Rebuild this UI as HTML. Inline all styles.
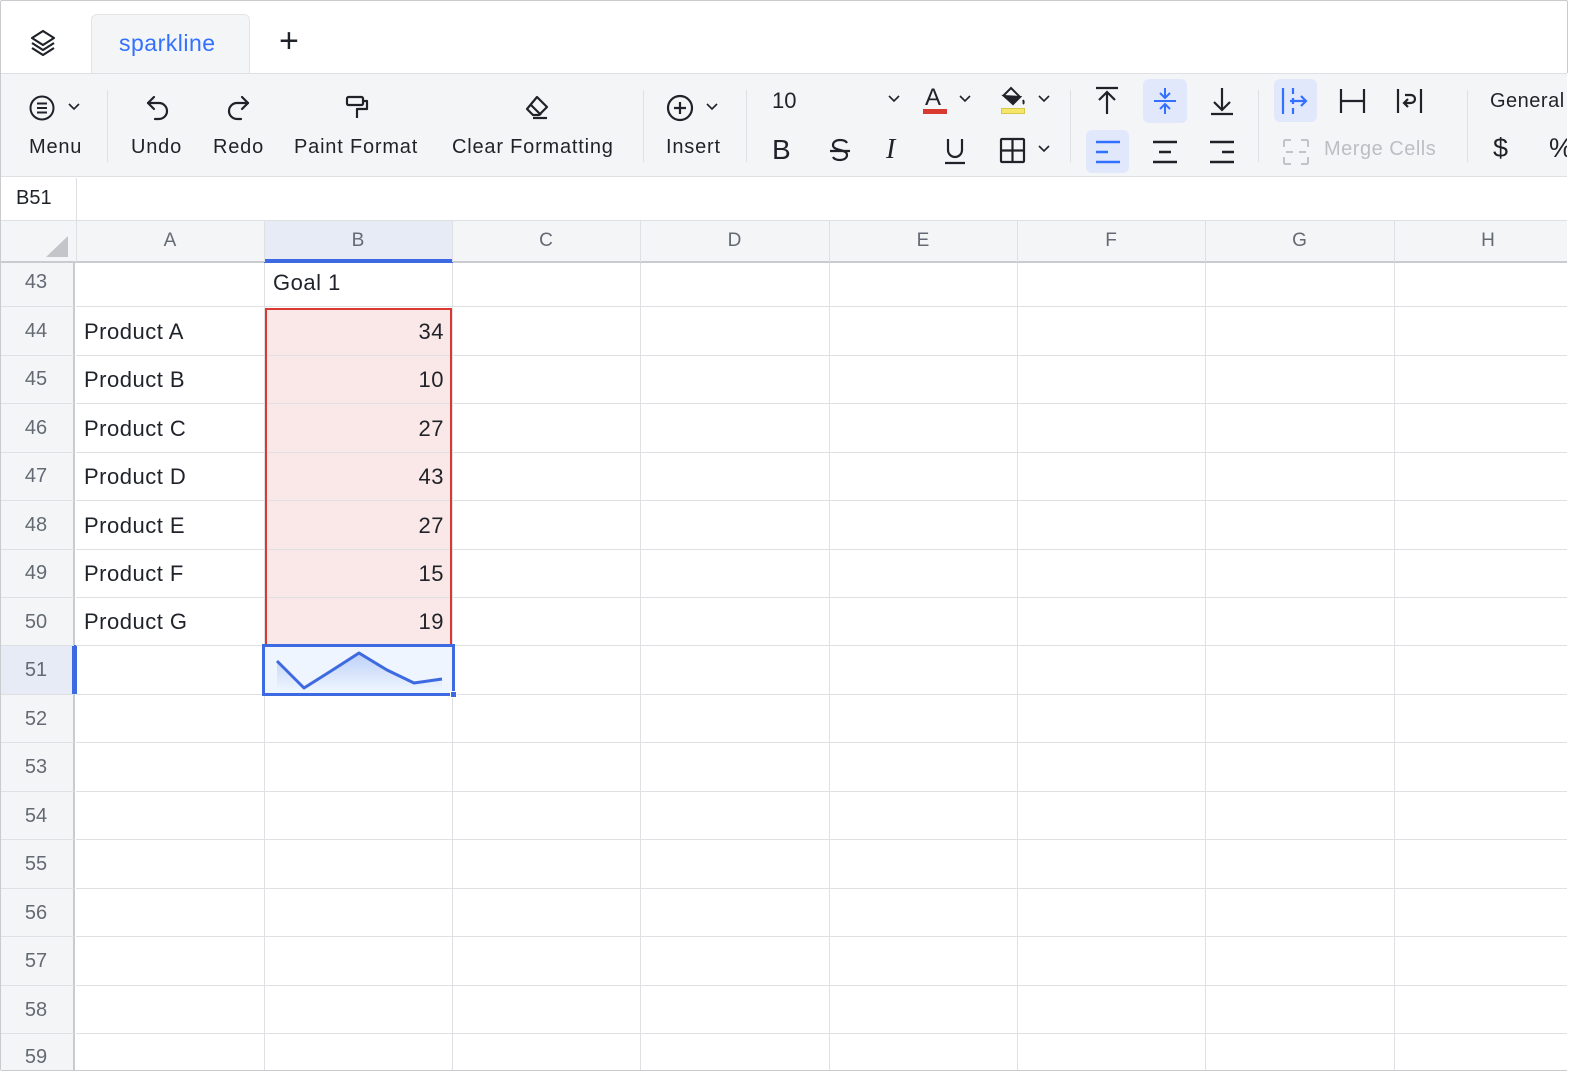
<!DOCTYPE html>
<html><head><meta charset="utf-8"><style>
*{box-sizing:border-box;margin:0;padding:0}
body{width:1574px;height:1076px;overflow:hidden;background:#fff;font-family:"Liberation Sans",sans-serif;color:#1f2329;position:relative}
.a{position:absolute}
.lbl{position:absolute;font-size:20px;color:#1f2329;top:136px;white-space:nowrap;letter-spacing:0.8px}
.hl{position:absolute;height:1px;left:76px;right:7px;background:#dee0e3}
.vl{position:absolute;width:1px;top:263px;bottom:6px;background:#dee0e3}
.rn{position:absolute;left:0;width:72px;text-align:center;font-size:20px;color:#646a73}
.ch{position:absolute;top:230px;font-size:19px;color:#646a73;text-align:center}
.ct{position:absolute;font-size:22px;color:#1f2329;letter-spacing:0.5px}
.sep{position:absolute;width:1px;background:#dee0e3}
svg{position:absolute}
</style></head><body>
<div class="a" style="left:0;top:0;width:1568px;height:1071px;border:1px solid #c9cbcf;border-radius:2px"></div>
<svg style="left:28px;top:28px" width="30" height="30" viewBox="0 0 30 30" fill="none" stroke="#1f2329" stroke-width="2.2" stroke-linejoin="round"><path d="M15 3 L26 10 L15 17 L4 10 Z"/><path d="M4 15 L15 22 L26 15"/><path d="M4 20 L15 27 L26 20"/></svg>
<div class="a" style="left:91px;top:14px;width:159px;height:60px;background:#f4f5f7;border:1px solid #e4e5e7;border-bottom:none;border-radius:6px 6px 0 0"></div>
<div class="a" style="left:119px;top:30px;font-size:23px;color:#3370ff;letter-spacing:0.5px">sparkline</div>
<div class="a" style="left:279px;top:22px;font-size:34px;color:#1f2329;font-weight:300">+</div>
<div class="a" style="left:1px;top:73px;width:1566px;height:104px;background:#f4f5f7;border-top:1px solid #dee0e3;border-bottom:1px solid #dee0e3"></div>
<svg style="left:28px;top:94px" width="28" height="28" viewBox="0 0 28 28" fill="none" stroke="#1f2329" stroke-width="2"><circle cx="14" cy="14" r="11.5"/><path d="M9 9.5h10M9 14h10M9 18.5h10"/></svg>
<svg style="left:67px;top:101px" width="14" height="12" viewBox="0 0 14 12" fill="none" stroke="#1f2329" stroke-width="1.6"><path d="M2 3l5 5 5-5"/></svg>
<div class="lbl" style="left:29px">Menu</div>
<div class="sep" style="left:107px;top:90px;height:72px"></div>
<svg style="left:144px;top:94px" width="28" height="28" viewBox="0 0 28 28" fill="none" stroke="#1f2329" stroke-width="2.2" stroke-linecap="round" stroke-linejoin="round"><path d="M10 3L4 9l6 6"/><path d="M4 9h11a8 8 0 0 1 0 16h-4"/></svg>
<div class="lbl" style="left:131px">Undo</div>
<svg style="left:224px;top:94px" width="28" height="28" viewBox="0 0 28 28" fill="none" stroke="#1f2329" stroke-width="2.2" stroke-linecap="round" stroke-linejoin="round"><path d="M18 3l6 6-6 6"/><path d="M24 9H13a8 8 0 0 0 0 16h4"/></svg>
<div class="lbl" style="left:213px">Redo</div>
<svg style="left:344px;top:94px" width="28" height="28" viewBox="0 0 28 28" fill="none" stroke="#1f2329" stroke-width="2.2" stroke-linejoin="round"><rect x="3" y="3" width="16" height="8" rx="1.5"/><path d="M19 7h4v8h-10v9"/></svg>
<div class="lbl" style="left:294px">Paint Format</div>
<svg style="left:522px;top:94px" width="30" height="28" viewBox="0 0 30 28" fill="none" stroke="#1f2329" stroke-width="2.2" stroke-linejoin="round"><path d="M15 3l10 10-8 8H11l-6-6z"/><path d="M9 11l10 10"/><path d="M11 24h14"/></svg>
<div class="lbl" style="left:452px">Clear Formatting</div>
<div class="sep" style="left:643px;top:90px;height:72px"></div>
<svg style="left:666px;top:94px" width="28" height="28" viewBox="0 0 28 28" fill="none" stroke="#1f2329" stroke-width="2.2"><circle cx="14" cy="14" r="12"/><path d="M14 8v12M8 14h12"/></svg>
<svg style="left:705px;top:101px" width="14" height="12" viewBox="0 0 14 12" fill="none" stroke="#1f2329" stroke-width="1.6"><path d="M2 3l5 5 5-5"/></svg>
<div class="lbl" style="left:666px">Insert</div>
<div class="sep" style="left:746px;top:90px;height:72px"></div>
<div class="a" style="left:772px;top:88px;font-size:22px">10</div>
<svg style="left:887px;top:93px" width="14" height="12" viewBox="0 0 14 12" fill="none" stroke="#1f2329" stroke-width="1.6"><path d="M2 3l5 5 5-5"/></svg>
<div class="a" style="left:925px;top:84px;font-size:24px">A</div>
<div class="a" style="left:923px;top:109px;width:24px;height:5px;background:#d83931"></div>
<svg style="left:958px;top:93px" width="14" height="12" viewBox="0 0 14 12" fill="none" stroke="#1f2329" stroke-width="1.6"><path d="M2 3l5 5 5-5"/></svg>
<svg style="left:999px;top:86px" width="28" height="22" viewBox="0 0 28 22" fill="#1f2329" stroke="#1f2329" stroke-width="2"><path d="M12 2l9 9-7 7-9-9z" fill="none"/><path d="M5 10l9 8 7-7z"/><path d="M24 14c1 2 1 3 0 4" /></svg>
<div class="a" style="left:1001px;top:108px;width:24px;height:6px;background:#f5e66a;border:1px solid #d8c84a"></div>
<svg style="left:1037px;top:93px" width="14" height="12" viewBox="0 0 14 12" fill="none" stroke="#1f2329" stroke-width="1.6"><path d="M2 3l5 5 5-5"/></svg>
<div class="a" style="left:772px;top:134px;font-size:28px">B</div>
<svg style="left:827px;top:137px" width="26" height="28" viewBox="0 0 26 28" fill="none" stroke="#1f2329" stroke-width="2.2"><path d="M20 6c-1-2-3-3-7-3-4 0-7 2-7 5 0 3 3 4 7 5 4 1 7 2 7 5s-3 5-7 5c-4 0-6-1-7-3"/><path d="M3 14h20"/></svg>
<div class="a" style="left:886px;top:134px;font-size:28px;font-style:italic;font-family:'Liberation Serif',serif">I</div>
<svg style="left:942px;top:137px" width="26" height="28" viewBox="0 0 26 28" fill="none" stroke="#1f2329" stroke-width="2.2"><path d="M6 2v11a7 7 0 0 0 14 0V2"/><path d="M3 26h20"/></svg>
<svg style="left:999px;top:137px" width="28" height="28" viewBox="0 0 28 28" fill="none" stroke="#1f2329" stroke-width="2.2"><rect x="2" y="2" width="23" height="23" rx="1"/><path d="M13.5 2v23M2 13.5h23"/></svg>
<svg style="left:1037px;top:143px" width="14" height="12" viewBox="0 0 14 12" fill="none" stroke="#1f2329" stroke-width="1.6"><path d="M2 3l5 5 5-5"/></svg>
<div class="sep" style="left:1070px;top:90px;height:72px"></div>
<svg style="left:1093px;top:86px" width="28" height="30" viewBox="0 0 28 30" fill="none" stroke="#1f2329" stroke-width="2.2"><path d="M3 2h22M14 28V6M6 14l8-8 8 8"/></svg>
<div class="a" style="left:1143px;top:79px;width:44px;height:44px;background:#e1e8fc;border-radius:6px"></div>
<svg style="left:1151px;top:86px" width="28" height="30" viewBox="0 0 28 30" fill="none" stroke="#3370ff" stroke-width="2"><path d="M3 15h22M14 2v10M9 7l5 5 5-5M14 28V18M9 23l5-5 5 5"/></svg>
<svg style="left:1208px;top:86px" width="28" height="30" viewBox="0 0 28 30" fill="none" stroke="#1f2329" stroke-width="2.2"><path d="M3 28h22M14 2v22M6 16l8 8 8-8"/></svg>
<div class="a" style="left:1086px;top:130px;width:43px;height:43px;background:#e1e8fc;border-radius:6px"></div>
<svg style="left:1094px;top:138px" width="28" height="28" viewBox="0 0 28 28" fill="none" stroke="#3370ff" stroke-width="2.4"><path d="M2 4h24M2 14h12M2 24h24"/></svg>
<svg style="left:1151px;top:138px" width="28" height="28" viewBox="0 0 28 28" fill="none" stroke="#1f2329" stroke-width="2.4"><path d="M2 4h24M8 14h12M2 24h24"/></svg>
<svg style="left:1208px;top:138px" width="28" height="28" viewBox="0 0 28 28" fill="none" stroke="#1f2329" stroke-width="2.4"><path d="M2 4h24M14 14h12M2 24h24"/></svg>
<div class="sep" style="left:1258px;top:90px;height:72px"></div>
<div class="a" style="left:1274px;top:79px;width:43px;height:43px;background:#e1e8fc;border-radius:6px"></div>
<svg style="left:1280px;top:86px" width="32" height="30" viewBox="0 0 32 30" fill="none" stroke="#3370ff" stroke-width="2.2"><path d="M3 2v26M13 2v6M13 12v6M13 22v6M10 15h16M21 10l5 5-5 5"/></svg>
<svg style="left:1338px;top:86px" width="30" height="30" viewBox="0 0 30 30" fill="none" stroke="#1f2329" stroke-width="2.2"><path d="M3 3v24M26 3v24M3 15h23"/></svg>
<svg style="left:1395px;top:86px" width="30" height="30" viewBox="0 0 30 30" fill="none" stroke="#1f2329" stroke-width="2.2"><path d="M3 3v24M26 3v24M10 9h6a4 4 0 0 1 0 8h-6M13 13l-4 4 4 4"/></svg>
<svg style="left:1282px;top:138px" width="28" height="28" viewBox="0 0 28 28" fill="none" stroke="#c0c3c8" stroke-width="2"><path d="M2 2h7M2 2v7M26 2h-7M26 2v7M2 26h7M2 26v-7M26 26h-7M26 26v-7M4 14h7M24 14h-7"/></svg>
<div class="a" style="left:1324px;top:138px;font-size:20px;color:#bbbfc4;letter-spacing:0.5px">Merge Cells</div>
<div class="sep" style="left:1467px;top:90px;height:72px"></div>
<div class="a" style="left:1490px;top:90px;font-size:20px;letter-spacing:0.5px">General</div>
<div class="a" style="left:1493px;top:133px;font-size:27px">$</div>
<div class="a" style="left:1549px;top:133px;font-size:27px">%</div>
<div class="a" style="left:1567px;top:73px;width:7px;height:1003px;background:#fff"></div>
<div class="a" style="left:16px;top:187px;font-size:20px">B51</div>
<div class="sep" style="left:76px;top:178px;height:42px"></div>
<div class="a" style="left:1px;top:220px;width:1566px;height:43px;background:#f4f5f7;border-top:1px solid #dee0e3;border-bottom:2px solid #c9cbcf"></div>
<svg style="left:46px;top:236px" width="24" height="22"><path d="M22 0V21H0Z" fill="#c2c5ca"/></svg>
<div class="a" style="left:264px;top:221px;width:188px;height:40px;background:#e6ebf5"></div>
<div class="a" style="left:264px;top:259px;width:189px;height:4px;background:#3e6ae1"></div>
<div class="ch" style="left:76px;width:188px">A</div>
<div class="ch" style="left:264px;width:188px">B</div>
<div class="ch" style="left:452px;width:188px">C</div>
<div class="ch" style="left:640px;width:189px">D</div>
<div class="ch" style="left:829px;width:188px">E</div>
<div class="ch" style="left:1017px;width:188px">F</div>
<div class="ch" style="left:1205px;width:189px">G</div>
<div class="ch" style="left:1394px;width:188px">H</div>
<div class="a" style="left:1px;top:263px;width:74px;height:807px;background:#f4f5f7;border-right:2px solid #c9cbcf"></div>
<div class="a" style="left:1px;top:645px;width:72px;height:49px;background:#e6ebf5"></div>
<div class="a" style="left:72px;top:645px;width:5px;height:49px;background:#3e6ae1"></div>
<div class="a" style="left:265px;top:308px;width:187px;height:337px;background:#fae8e8"></div>
<div class="a" style="left:265px;top:646px;width:187px;height:48px;background:#eef5fe"></div>
<div class="hl" style="top:306px"></div><div class="hl" style="top:355px"></div><div class="hl" style="top:403px"></div><div class="hl" style="top:452px"></div><div class="hl" style="top:500px"></div><div class="hl" style="top:549px"></div><div class="hl" style="top:597px"></div><div class="hl" style="top:645px"></div><div class="hl" style="top:694px"></div><div class="hl" style="top:742px"></div><div class="hl" style="top:791px"></div><div class="hl" style="top:839px"></div><div class="hl" style="top:888px"></div><div class="hl" style="top:936px"></div><div class="hl" style="top:985px"></div><div class="hl" style="top:1033px"></div>
<div class="hl" style="left:1px;width:73px;top:306px"></div><div class="hl" style="left:1px;width:73px;top:355px"></div><div class="hl" style="left:1px;width:73px;top:403px"></div><div class="hl" style="left:1px;width:73px;top:452px"></div><div class="hl" style="left:1px;width:73px;top:500px"></div><div class="hl" style="left:1px;width:73px;top:549px"></div><div class="hl" style="left:1px;width:73px;top:597px"></div><div class="hl" style="left:1px;width:73px;top:645px"></div><div class="hl" style="left:1px;width:73px;top:694px"></div><div class="hl" style="left:1px;width:73px;top:742px"></div><div class="hl" style="left:1px;width:73px;top:791px"></div><div class="hl" style="left:1px;width:73px;top:839px"></div><div class="hl" style="left:1px;width:73px;top:888px"></div><div class="hl" style="left:1px;width:73px;top:936px"></div><div class="hl" style="left:1px;width:73px;top:985px"></div><div class="hl" style="left:1px;width:73px;top:1033px"></div>
<div class="vl" style="left:264px"></div><div class="vl" style="left:452px"></div><div class="vl" style="left:640px"></div><div class="vl" style="left:829px"></div><div class="vl" style="left:1017px"></div><div class="vl" style="left:1205px"></div><div class="vl" style="left:1394px"></div>
<div class="sep" style="left:829px;top:221px;height:41px"></div><div class="sep" style="left:1017px;top:221px;height:41px"></div><div class="sep" style="left:1205px;top:221px;height:41px"></div><div class="sep" style="left:1394px;top:221px;height:41px"></div><div class="sep" style="left:640px;top:221px;height:41px"></div><div class="sep" style="left:452px;top:221px;height:41px"></div><div class="sep" style="left:264px;top:221px;height:41px"></div><div class="sep" style="left:76px;top:221px;height:41px"></div>
<div class="a" style="left:265px;top:308px;width:187px;height:338px;border:2px solid #d83931;border-bottom:none"></div>
<div class="rn" style="top:271px">43</div><div class="rn" style="top:320px">44</div><div class="rn" style="top:368px">45</div><div class="rn" style="top:417px">46</div><div class="rn" style="top:465px">47</div><div class="rn" style="top:514px">48</div><div class="rn" style="top:562px">49</div><div class="rn" style="top:611px">50</div><div class="rn" style="top:659px">51</div><div class="rn" style="top:708px">52</div><div class="rn" style="top:756px">53</div><div class="rn" style="top:805px">54</div><div class="rn" style="top:853px">55</div><div class="rn" style="top:902px">56</div><div class="rn" style="top:950px">57</div><div class="rn" style="top:999px">58</div><div class="rn" style="top:1046px">59</div>
<div class="ct" style="left:273px;top:270px">Goal 1</div>
<div class="ct" style="left:84px;top:319px">Product A</div><div class="ct" style="left:84px;top:367px">Product B</div><div class="ct" style="left:84px;top:416px">Product C</div><div class="ct" style="left:84px;top:464px">Product D</div><div class="ct" style="left:84px;top:513px">Product E</div><div class="ct" style="left:84px;top:561px">Product F</div><div class="ct" style="left:84px;top:609px">Product G</div>
<div class="ct" style="right:1130px;top:319px">34</div><div class="ct" style="right:1130px;top:367px">10</div><div class="ct" style="right:1130px;top:416px">27</div><div class="ct" style="right:1130px;top:464px">43</div><div class="ct" style="right:1130px;top:513px">27</div><div class="ct" style="right:1130px;top:561px">15</div><div class="ct" style="right:1130px;top:609px">19</div>
<svg style="left:0;top:0" width="1574" height="1076"><defs><linearGradient id="g" x1="0" y1="0" x2="0" y2="1"><stop offset="0" stop-color="#bcd0f7"/><stop offset="1" stop-color="#eef5fe"/></linearGradient></defs>
<path d="M277 661L304 688L331 671L359 653L387 670L414 683L442 679L442 691L277 691Z" fill="url(#g)"/>
<path d="M277 661L304 688L331 671L359 653L387 670L414 683L442 679" fill="none" stroke="#3e6ae1" stroke-width="3" stroke-linejoin="round"/></svg>
<div class="a" style="left:262px;top:644px;width:193px;height:52px;border:3px solid #3e6ae1"></div>
<div class="a" style="left:450px;top:691px;width:7px;height:7px;background:#3e6ae1;border:1px solid #fff"></div>
</body></html>
